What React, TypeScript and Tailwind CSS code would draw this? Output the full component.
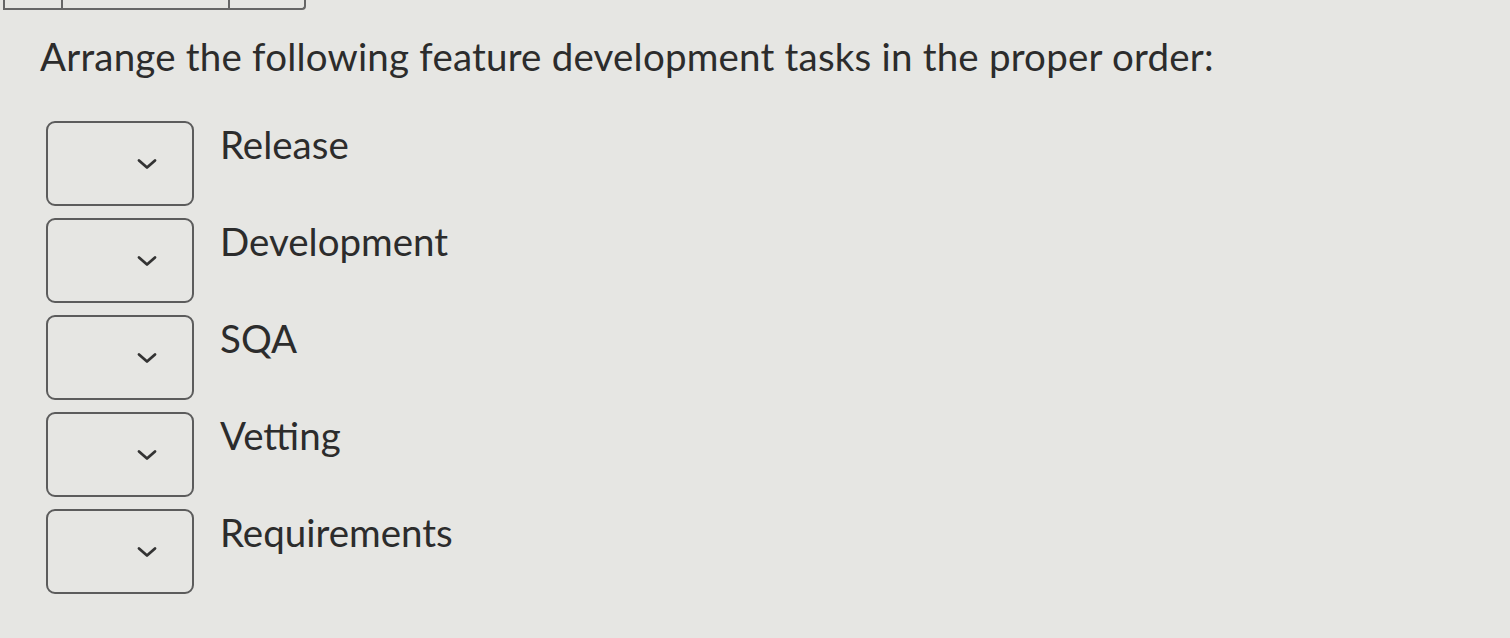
const tasks = ["Release", "Development", "SQA", "Vetting", "Requirements"]

function OrderSelect() {
  return (
    <div className="flex h-[85px] w-[148px] shrink-0 items-center justify-end rounded-[9px] border-2 border-[#5c5c5c] pr-[34px]">
      <svg width="22" height="14" viewBox="0 0 22 14" fill="none" className="text-[#333]">
        <path d="M3 3.5 L11 10.5 L19 3.5" stroke="currentColor" strokeWidth="2.8" strokeLinecap="round" strokeLinejoin="round" />
      </svg>
    </div>
  )
}

export default function App() {
  return (
    <div
      className="min-h-screen w-full bg-[#e6e6e3] text-[#2c2c2c]"
      style={{ fontFamily: "Lato, 'Open Sans', sans-serif" }}
    >
      {/* tail of the table above the question */}
      <div className="ml-[3px] flex h-[10px] w-[303px] rounded-br-[4px] border-b-2 border-l-2 border-r-2 border-[#666]">
        <div className="w-[58px] border-r-2 border-[#666]" />
        <div className="w-[167px] border-r-2 border-[#666]" />
      </div>

      <div className="pl-[40px] pt-[22px]">
        <h1 className="text-[38.5px] leading-[48px] tracking-[0.2px]">
          Arrange the following feature development tasks in the proper order:
        </h1>

        <ul className="mt-[41px] flex flex-col gap-[12px] pl-[6px]">
          {tasks.map((task) => (
            <li key={task} className="flex items-start gap-[26px]">
              <OrderSelect />
              <span className="text-[38.5px] leading-[46px]">{task}</span>
            </li>
          ))}
        </ul>
      </div>
    </div>
  )
}
